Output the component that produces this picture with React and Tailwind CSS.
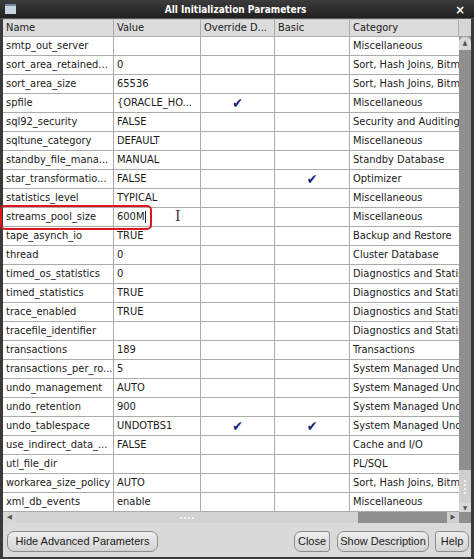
import React from "react";

const rows = [
  ["smtp_out_server", "", false, false, "Miscellaneous"],
  ["sort_area_retained...", "0", false, false, "Sort, Hash Joins, Bitm"],
  ["sort_area_size", "65536", false, false, "Sort, Hash Joins, Bitm"],
  ["spfile", "{ORACLE_HO...", true, false, "Miscellaneous"],
  ["sql92_security", "FALSE", false, false, "Security and Auditing"],
  ["sqltune_category", "DEFAULT", false, false, "Miscellaneous"],
  ["standby_file_mana...", "MANUAL", false, false, "Standby Database"],
  ["star_transformatio...", "FALSE", false, true, "Optimizer"],
  ["statistics_level", "TYPICAL", false, false, "Miscellaneous"],
  ["streams_pool_size", "600M", false, false, "Miscellaneous"],
  ["tape_asynch_io", "TRUE", false, false, "Backup and Restore"],
  ["thread", "0", false, false, "Cluster Database"],
  ["timed_os_statistics", "0", false, false, "Diagnostics and Statis"],
  ["timed_statistics", "TRUE", false, false, "Diagnostics and Statis"],
  ["trace_enabled", "TRUE", false, false, "Diagnostics and Statis"],
  ["tracefile_identifier", "", false, false, "Diagnostics and Statis"],
  ["transactions", "189", false, false, "Transactions"],
  ["transactions_per_ro...", "5", false, false, "System Managed Unc"],
  ["undo_management", "AUTO", false, false, "System Managed Unc"],
  ["undo_retention", "900", false, false, "System Managed Unc"],
  ["undo_tablespace", "UNDOTBS1", true, true, "System Managed Unc"],
  ["use_indirect_data_...", "FALSE", false, false, "Cache and I/O"],
  ["utl_file_dir", "", false, false, "PL/SQL"],
  ["workarea_size_policy", "AUTO", false, false, "Sort, Hash Joins, Bitm"],
  ["xml_db_events", "enable", false, false, "Miscellaneous"],
];

const cols = "grid grid-cols-[111px_87px_74px_75px_109px]";
const cell = "h-full border-r border-b border-[#ababab] px-[3px] flex items-center overflow-hidden whitespace-nowrap";

function Check() {
  return <span className="text-[#1b1f7e] text-[14px] leading-none">✔</span>;
}

function Dots({ vertical }) {
  return (
    <div className={`flex ${vertical ? "flex-col" : ""} gap-[2px]`}>
      {[0, 1, 2, 3].map((i) => (
        <span key={i} className="w-[2px] h-[2px] bg-[#f4f4f4]" />
      ))}
    </div>
  );
}

function Btn({ children, className = "" }) {
  return (
    <button className={`h-[21px] rounded-[7px] border border-[#8c8c8c] bg-gradient-to-b from-[#eeeeee] to-[#d4d4d4] text-[11px] text-[#1a1a1a] leading-none ${className}`}>
      {children}
    </button>
  );
}

export default function App() {
  return (
    <div
      className="relative w-[474px] h-[559px] bg-[#3a3a3a] flex flex-col overflow-hidden text-[#1a1a1a]"
      style={{ fontFamily: "'DejaVu Sans Condensed', 'DejaVu Sans', sans-serif" }}
    >
      {/* title bar */}
      <div className="h-[18px] flex items-center px-[5px] bg-gradient-to-b from-[#3c3c3c] to-[#202020] relative">
        <div className="w-[11px] h-[10px] bg-[#c8d4e0] border-t-[2px] border-[#6f87a6]" />
        <div className="flex-1 text-center text-white font-bold text-[10px]">All Initialization Parameters</div>
        <span className="text-white text-[13px] font-bold leading-none mr-[4px]">×</span>
      </div>
      <div className="h-[1px] bg-[#5a5a5a]" />

      <div className="flex-1 flex flex-col mx-[3px] bg-[#dadada]">
        {/* table + vscroll */}
        <div className="flex bg-white">
          <div className="w-[456px] text-[11px]">
            <div className={`${cols} h-[18px] bg-[#dcdcdc] border-t border-[#c4c4c4]`}>
              {["Name", "Value", "Override D...", "Basic", "Category"].map((h) => (
                <div key={h} className={`${cell} border-[#a0a0a0]`}>{h}</div>
              ))}
            </div>
            {rows.map(([name, value, ov, basic, cat]) => (
              <div key={name} className={`${cols} h-[19px] bg-white`}>
                <div className={cell}>{name}</div>
                <div className={cell}>
                  {value}
                  {name === "streams_pool_size" && <span className="ml-[1px] w-[1px] h-[12px] bg-[#222]" />}
                </div>
                <div className={`${cell} justify-center`}>{ov && <Check />}</div>
                <div className={`${cell} justify-center`}>{basic && <Check />}</div>
                <div className={`${cell} border-r-0`}>{cat}</div>
              </div>
            ))}
          </div>
          <div className="w-[12px] flex flex-col bg-[#8f8f8f]">
            <div className="h-[18px] bg-[#d6d6d6] border-b border-[#a0a0a0]" />
            <div className="h-[13px] bg-[#d8d8d8] rounded-t-[5px] flex items-center justify-center text-[7px] text-[#555]">▲</div>
            <div className="flex-1" />
            <div className="h-[33px] bg-[#cfcfcf] flex items-center justify-center"><Dots vertical /></div>
            <div className="h-[9px] bg-[#d8d8d8] flex items-center justify-center text-[6px] text-[#555]">▼</div>
          </div>
        </div>

        {/* hscroll */}
        <div className="h-[11px] flex bg-[#8f8f8f]">
          <div className="w-[13px] bg-[#d8d8d8] flex items-center justify-center text-[7px] text-[#555]">◀</div>
          <div className="w-[342px] bg-[#d2d2d2] flex items-center justify-center"><Dots /></div>
          <div className="flex-1" />
          <div className="w-[12px] bg-[#d0d0d0] flex items-center justify-center text-[7px] text-[#555]">▶</div>
          <div className="w-[12px] bg-[#8f8f8f]" />
        </div>

        {/* buttons */}
        <div className="flex-1 flex items-center pl-[4px] pr-[2px] pt-[2px] bg-[#dadada]" style={{ fontFamily: "'Liberation Sans', sans-serif" }}>
          <Btn className="w-[151px]">Hide Advanced Parameters</Btn>
          <div className="flex-1" />
          <Btn className="w-[36px] rounded-r-[3px]">Close</Btn>
          <Btn className="w-[92px] ml-[7px] rounded-[3px]">Show Description</Btn>
          <Btn className="w-[34px] ml-[6px] rounded-l-[3px]">Help</Btn>
        </div>
      </div>
      <div className="h-[2px] bg-[#3a3a3a]" />

      {/* annotation over the table */}
      <div className="absolute left-0 top-[205px] w-[152px] h-[25px] border-2 border-[#e0141c] rounded-[5px]" />
      <span className="absolute left-[175px] top-[209px] text-[14px] text-[#333] leading-none" style={{ fontFamily: "'DejaVu Serif', serif" }}>I</span>
    </div>
  );
}
